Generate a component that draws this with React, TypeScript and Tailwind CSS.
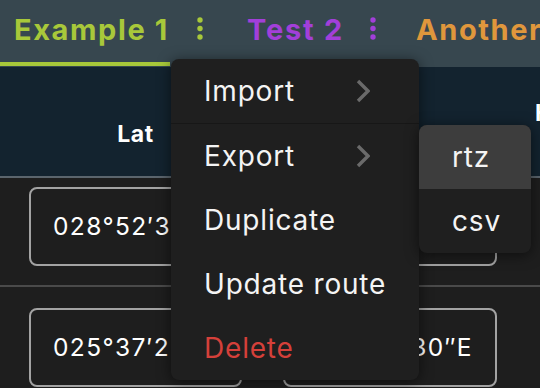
import React from "react";

function Dots({ color }: { color: string }) {
  return (
    <svg width="6" height="24" viewBox="0 0 6 24" fill={color}>
      <circle cx="3" cy="3" r="2.7" />
      <circle cx="3" cy="11.5" r="2.7" />
      <circle cx="3" cy="20" r="2.7" />
    </svg>
  );
}

function Chevron() {
  return (
    <svg width="14" height="24" viewBox="0 0 14 24" fill="none" stroke="#6a6a6a" strokeWidth="3.4" strokeLinecap="butt" strokeLinejoin="miter">
      <polyline points="2,2 12,12 2,22" />
    </svg>
  );
}

export default function App() {
  return (
    <div className="relative w-[540px] h-[388px] overflow-hidden bg-[#1e1e1e] font-['Inter',sans-serif] text-white">
      {/* Tab bar */}
      <div className="flex h-[67px] bg-[#37474f] whitespace-nowrap">
        <div className="flex h-[66px] w-[170px] shrink-0 items-center border-b-4 border-[#a8c83a] pl-[14px] pb-[3px] text-[29px] font-bold tracking-[1.6px] text-[#a8c83a]">
          Example 1
        </div>
        <div className="flex h-[66px] w-[60px] shrink-0 items-center justify-center pb-[8px]">
          <Dots color="#a8c83a" />
        </div>
        <div className="flex h-[66px] w-[113px] shrink-0 items-center pl-[17px] pb-[7px] text-[29px] font-bold tracking-[1.8px] text-[#a23fd9]">
          Test 2
        </div>
        <div className="flex h-[66px] w-[60px] shrink-0 items-center justify-center pb-[8px]">
          <Dots color="#a23fd9" />
        </div>
        <div className="flex h-[66px] shrink-0 items-center pl-[13px] pb-[7px] text-[29px] font-bold tracking-[1.6px] text-[#e0973c]">
          Another
        </div>
      </div>

      {/* Header */}
      <div className="flex h-[111px] items-end border-b-2 border-[#5b656d] bg-[#13232f] pb-[27px] text-[23px] font-bold whitespace-nowrap">
        <div className="w-[271px] shrink-0 text-center leading-[29px] tracking-[0.5px]">Lat</div>
        <div className="w-[239px] shrink-0 text-center leading-[29px] tracking-[0.5px]">Lon</div>
        <div className="shrink-0 self-start pl-[25px] pt-[32px] leading-[29px]">Hdg</div>
      </div>

      {/* Row 1 */}
      <div className="flex h-[109px] gap-[41px] border-b-2 border-[#4a4a4a] pl-[29px] pt-[9px] whitespace-nowrap">
        <div className="flex h-[79px] w-[213px] shrink-0 items-center overflow-hidden rounded-[8px] border-2 border-[#a3a3a3] pl-[22px] text-[24.5px] tracking-[1.4px]">
          028°52′34″N
        </div>
        <div className="flex h-[79px] w-[214px] shrink-0 items-center overflow-hidden rounded-[8px] border-2 border-[#a3a3a3] pl-[22px] text-[24.5px] tracking-[1.4px]">
          011°48′12″E
        </div>
      </div>

      {/* Row 2 */}
      <div className="flex gap-[41px] pl-[29px] pt-[21px] whitespace-nowrap">
        <div className="flex h-[79px] w-[213px] shrink-0 items-center overflow-hidden rounded-[8px] border-2 border-[#a3a3a3] pl-[22px] text-[24.5px] tracking-[1.4px]">
          025°37′22″N
        </div>
        <div className="flex h-[79px] w-[214px] shrink-0 items-center justify-end overflow-hidden rounded-[8px] border-2 border-[#a3a3a3] pr-[22px] text-[24.5px] tracking-[1.4px]">
          014°06′30″E
        </div>
      </div>

      {/* Context menu */}
      <div className="absolute left-[171px] top-[59px] w-[248px] rounded-[8px] bg-[#1f1f1f] text-[28px] tracking-[0.8px] text-[#f4f4f4] shadow-[0_2px_14px_rgba(0,0,0,0.55)] whitespace-nowrap">
        <div className="flex h-[64px] items-center justify-between pl-[33px] pr-[49px]">
          <span>Import</span>
          <Chevron />
        </div>
        <div className="h-px bg-[#171717]" />
        <div className="flex h-[64px] items-center justify-between pl-[33px] pr-[49px]">
          <span>Export</span>
          <Chevron />
        </div>
        <div className="flex h-[64px] items-center pl-[33px]">Duplicate</div>
        <div className="flex h-[64px] items-center pl-[33px]">Update route</div>
        <div className="flex h-[64px] items-center pl-[33px] text-[#d5403a]">Delete</div>
      </div>

      {/* Submenu */}
      <div className="absolute left-[419px] top-[125px] w-[112px] overflow-hidden rounded-[8px] bg-[#1f1f1f] text-[28px] tracking-[0.8px] text-[#f4f4f4] shadow-[0_2px_14px_rgba(0,0,0,0.55)]">
        <div className="flex h-[64px] items-center bg-[#3d3d3d] pl-[33px]">rtz</div>
        <div className="flex h-[64px] items-center pl-[33px]">csv</div>
      </div>
    </div>
  );
}
